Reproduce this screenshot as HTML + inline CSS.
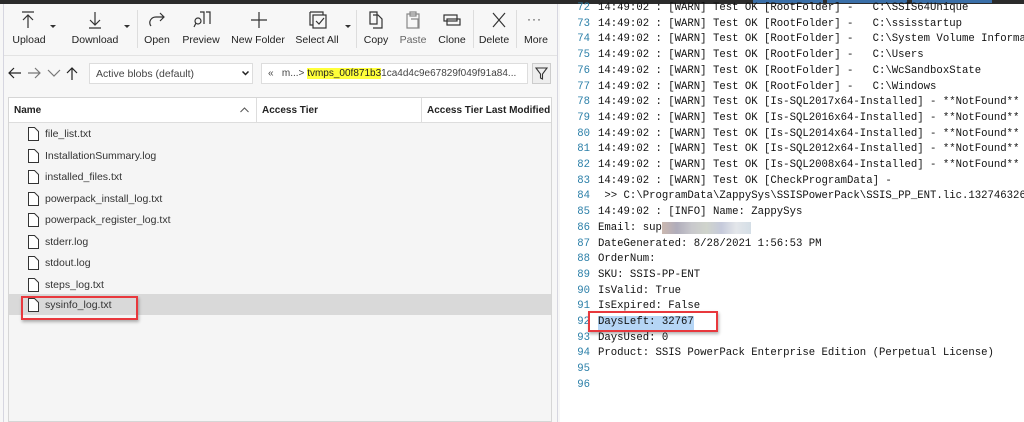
<!DOCTYPE html>
<html><head><meta charset="utf-8"><style>
*{box-sizing:border-box;margin:0;padding:0}
body{width:1024px;height:422px;overflow:hidden;background:#fff;font-family:"Liberation Sans",sans-serif;position:relative}
.a{position:absolute}
.lbl{position:absolute;top:34px;font-size:10.5px;color:#222;transform:translateX(-50%);white-space:nowrap}
.lbl.d{color:#666}
.sep{position:absolute;top:10px;width:1px;height:38px;background:#ddd}
.ic{position:absolute;top:10px}
.row{position:absolute;left:9px;width:542px;height:21px;font-size:10.5px;color:#333}
.row span{position:absolute;left:36px;top:5px}
.row svg{position:absolute;left:19px;top:4px}
.code{position:absolute;left:560px;font-family:"Liberation Mono",monospace;font-size:10.65px;white-space:pre;color:#111}
.ln{display:inline-block;width:30px;text-align:right;color:#2b7fa8;margin-right:8px}
</style></head><body>
<div class="a" style="left:0;top:0;width:560px;height:422px;background:#f7f7f7"></div>
<div class="a" style="left:0;top:0;width:1024px;height:4px;background:#2b2b2b"></div>
<div class="a" style="left:753px;top:0;width:70px;height:3px;background:#3a6fa8"></div>
<div class="a" style="left:827px;top:0;width:80px;height:3px;background:#3a6fa8"></div>
<div class="a" style="left:912px;top:0;width:80px;height:3px;background:#3a6fa8"></div>
<div class="a" style="left:3px;top:4px;width:1px;height:418px;background:#d6d6e0"></div>
<div class="a" style="left:557px;top:4px;width:1px;height:418px;background:#d6d6e0"></div>
<div class="a" style="left:4px;top:55px;width:553px;height:1px;background:#e3e3e3"></div>

<svg class="ic" style="left:20px" width="16" height="20" viewBox="0 0 16 20" fill="none" stroke="#333" stroke-width="1.2"><path d="M2 2h12M8 18V5M3 10l5-5 5 5"/></svg>
<svg class="a" style="left:50px;top:25px" width="6" height="4"><path d="M0 0h6L3 3z" fill="#333"/></svg>
<svg class="ic" style="left:87px" width="16" height="20" viewBox="0 0 16 20" fill="none" stroke="#333" stroke-width="1.2"><path d="M2 18h12M8 2v13M3 10l5 5 5-5"/></svg>
<svg class="a" style="left:124px;top:25px" width="6" height="4"><path d="M0 0h6L3 3z" fill="#333"/></svg>
<div class="sep" style="left:137px"></div>
<svg class="ic" style="left:147px" width="20" height="20" viewBox="0 0 20 20" fill="none" stroke="#333" stroke-width="1.2"><path d="M4 16c-3-4 0-9 5-9h8M13 3l4 4-4 4"/></svg>
<svg class="ic" style="left:193px" width="18" height="20" viewBox="0 0 18 20" fill="none" stroke="#333" stroke-width="1.2"><path d="M7 2h4v12M13 2h4v12"/><circle cx="5" cy="11" r="3"/><path d="M3 13l-2 4"/></svg>
<svg class="ic" style="left:250px" width="18" height="20" viewBox="0 0 18 20" fill="none" stroke="#333" stroke-width="1.2"><path d="M9 2v16M1 10h16"/></svg>
<svg class="ic" style="left:309px" width="18" height="20" viewBox="0 0 18 20" fill="none" stroke="#333" stroke-width="1.2"><path d="M1 2h13v3M1 2v13h3"/><rect x="4" y="5" width="13" height="13"/><path d="M7 11l3 3 5-6"/></svg>
<svg class="a" style="left:345px;top:25px" width="6" height="4"><path d="M0 0h6L3 3z" fill="#333"/></svg>
<div class="sep" style="left:356px"></div>
<svg class="ic" style="left:368px" width="16" height="20" viewBox="0 0 16 20" fill="none" stroke="#333" stroke-width="1.2"><path d="M2 2h7v12H2zM5 5h5l4 4v9H5"/></svg>
<svg class="ic" style="left:405px" width="16" height="20" viewBox="0 0 16 20" fill="none" stroke="#888" stroke-width="1.2"><path d="M2 4h12v14H2zM5 2h6v4H5zM6 9h7v9"/></svg>
<svg class="ic" style="left:443px" width="18" height="20" viewBox="0 0 18 20" fill="none" stroke="#333" stroke-width="1.2"><rect x="1" y="5" width="13" height="6"/><rect x="4" y="9" width="13" height="6"/></svg>
<div class="sep" style="left:473px"></div>
<svg class="ic" style="left:491px" width="16" height="20" viewBox="0 0 16 20" fill="none" stroke="#333" stroke-width="1.2"><path d="M2 3l12 14M14 3L2 17"/></svg>
<div class="sep" style="left:516px"></div>
<div class="a" style="left:527px;top:12px;font-size:12px;color:#333;letter-spacing:1px">···</div>

<div class="lbl" style="left:29px">Upload</div>
<div class="lbl" style="left:95px">Download</div>
<div class="lbl" style="left:157px">Open</div>
<div class="lbl" style="left:201px">Preview</div>
<div class="lbl" style="left:258px">New Folder</div>
<div class="lbl" style="left:317px">Select All</div>
<div class="lbl" style="left:376px">Copy</div>
<div class="lbl d" style="left:413px">Paste</div>
<div class="lbl" style="left:452px">Clone</div>
<div class="lbl" style="left:494px">Delete</div>
<div class="lbl" style="left:536px">More</div>

<svg class="a" style="left:8px;top:66px" width="80" height="14" fill="none" stroke-width="1.2"><path d="M1 7h12M6 2L1 7l5 5" stroke="#222"/><path d="M20 7h12M27 2l5 5-5 5" stroke="#777"/><path d="M40 4l6 6 6-6" stroke="#777"/><path d="M64 2v12M59 7l5-5 5 5" stroke="#222"/></svg>
<div class="a" style="left:89px;top:63px;width:164px;height:21px;background:#fff;border:1px solid #ddd;font-size:10.5px;color:#444;padding:4px 0 0 6px">Active blobs (default)</div>
<svg class="a" style="left:242px;top:71px" width="7" height="5"><path d="M0.5 0.5l3 3 3-3" stroke="#222" stroke-width="1.5" fill="none"/></svg>
<div class="a" style="left:261px;top:63px;width:267px;height:21px;background:#fff;border:1px solid #ddd;font-size:10px;color:#444;padding:4px 0 0 6px;white-space:nowrap">«&nbsp;&nbsp;&nbsp;m...&gt; <span style="background:#ffff3a;color:#222">tvmps_00f871b3</span>1ca4d4c9e67829f049f91a84...</div>
<div class="a" style="left:532px;top:63px;width:19px;height:21px;background:#eee;border:1px solid #ccc"></div>
<svg class="a" style="left:535px;top:67px" width="13" height="13" fill="none" stroke="#333" stroke-width="1.1"><path d="M1 1h11L7.5 7v5l-2-1V7z"/></svg>

<div class="a" style="left:8px;top:97px;width:544px;height:325px;border:1px solid #d6d6d6;background:#f5f5f5"></div>
<div class="a" style="left:9px;top:98px;width:542px;height:25px;background:#fff;border-bottom:1px solid #ddd;font-size:10px;font-weight:bold;color:#222;white-space:nowrap;overflow:hidden">
<span class="a" style="left:5px;top:7px">Name</span>
<svg class="a" style="left:231px;top:9px" width="9" height="6"><path d="M0.5 5l4-4 4 4" stroke="#555" fill="none"/></svg>
<div class="a" style="left:247px;top:0;width:1px;height:24px;background:#ddd"></div>
<span class="a" style="left:253px;top:7px">Access Tier</span>
<div class="a" style="left:412px;top:0;width:1px;height:24px;background:#ddd"></div>
<span class="a" style="left:418px;top:7px">Access Tier Last Modified</span>
</div>
<div class="row" style="top:123px"><svg width="11" height="14"><path d="M.5.5h6l4 4v9H.5z" fill="#fff" stroke="#333"/></svg><span>file_list.txt</span></div>
<div class="row" style="top:145px"><svg width="11" height="14"><path d="M.5.5h6l4 4v9H.5z" fill="#fff" stroke="#333"/></svg><span>InstallationSummary.log</span></div>
<div class="row" style="top:166px"><svg width="11" height="14"><path d="M.5.5h6l4 4v9H.5z" fill="#fff" stroke="#333"/></svg><span>installed_files.txt</span></div>
<div class="row" style="top:188px"><svg width="11" height="14"><path d="M.5.5h6l4 4v9H.5z" fill="#fff" stroke="#333"/></svg><span>powerpack_install_log.txt</span></div>
<div class="row" style="top:209px"><svg width="11" height="14"><path d="M.5.5h6l4 4v9H.5z" fill="#fff" stroke="#333"/></svg><span>powerpack_register_log.txt</span></div>
<div class="row" style="top:231px"><svg width="11" height="14"><path d="M.5.5h6l4 4v9H.5z" fill="#fff" stroke="#333"/></svg><span>stderr.log</span></div>
<div class="row" style="top:252px"><svg width="11" height="14"><path d="M.5.5h6l4 4v9H.5z" fill="#fff" stroke="#333"/></svg><span>stdout.log</span></div>
<div class="row" style="top:274px"><svg width="11" height="14"><path d="M.5.5h6l4 4v9H.5z" fill="#fff" stroke="#333"/></svg><span>steps_log.txt</span></div>
<div class="row" style="top:294px;background:#d9d9d9"><svg width="11" height="14"><path d="M.5.5h6l4 4v9H.5z" fill="#fff" stroke="#333"/></svg><span>sysinfo_log.txt</span></div>
<div class="a" style="left:21px;top:296px;width:117px;height:24px;border:2px solid #e8383d;box-shadow:1px 2px 3px rgba(0,0,0,.3)"></div>

<div class="a" style="left:598px;top:316px;width:96px;height:14px;background:#b5d5f5"></div>
<div class="code" style="top:1px;line-height:15.7px"><span class="ln">72</span>14:49:02 : [WARN] Test OK [RootFolder] -   C:\SSIS64Unique
<span class="ln">73</span>14:49:02 : [WARN] Test OK [RootFolder] -   C:\ssisstartup
<span class="ln">74</span>14:49:02 : [WARN] Test OK [RootFolder] -   C:\System Volume Informa
<span class="ln">75</span>14:49:02 : [WARN] Test OK [RootFolder] -   C:\Users
<span class="ln">76</span>14:49:02 : [WARN] Test OK [RootFolder] -   C:\WcSandboxState
<span class="ln">77</span>14:49:02 : [WARN] Test OK [RootFolder] -   C:\Windows
<span class="ln">78</span>14:49:02 : [WARN] Test OK [Is-SQL2017x64-Installed] - **NotFound**
<span class="ln">79</span>14:49:02 : [WARN] Test OK [Is-SQL2016x64-Installed] - **NotFound**
<span class="ln">80</span>14:49:02 : [WARN] Test OK [Is-SQL2014x64-Installed] - **NotFound**
<span class="ln">81</span>14:49:02 : [WARN] Test OK [Is-SQL2012x64-Installed] - **NotFound**
<span class="ln">82</span>14:49:02 : [WARN] Test OK [Is-SQL2008x64-Installed] - **NotFound**
<span class="ln">83</span>14:49:02 : [WARN] Test OK [CheckProgramData] -
<span class="ln">84</span> &gt;&gt; C:\ProgramData\ZappySys\SSISPowerPack\SSIS_PP_ENT.lic.132746326
<span class="ln">85</span>14:49:02 : [INFO] Name: ZappySys
<span class="ln">86</span>Email: sup<span style="background:linear-gradient(90deg,#cbb8b0,#b0adbb,#c8c8cc,#d0d4cc,#c5cadb,#e3e6ea,#d4dee6);color:transparent">xxxxxxxxxxxxxx</span>
<span class="ln">87</span>DateGenerated: 8/28/2021 1:56:53 PM
<span class="ln">88</span>OrderNum:
<span class="ln">89</span>SKU: SSIS-PP-ENT
<span class="ln">90</span>IsValid: True
<span class="ln">91</span>IsExpired: False
<span class="ln">92</span>DaysLeft: 32767
<span class="ln">93</span>DaysUsed: 0
<span class="ln">94</span>Product: SSIS PowerPack Enterprise Edition (Perpetual License)
<span class="ln">95</span>
<span class="ln">96</span></div>
<div class="a" style="left:588px;top:311px;width:130px;height:21px;border:2px solid #e8383d;box-shadow:1px 2px 3px rgba(0,0,0,.3)"></div>
</body></html>
